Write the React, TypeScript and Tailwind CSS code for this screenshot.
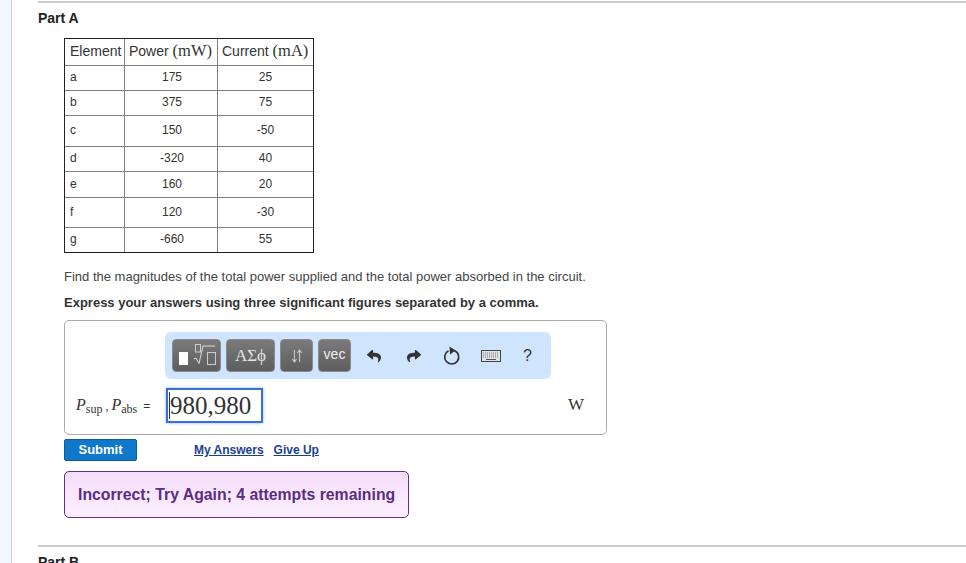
import { FaReply, FaShare } from "react-icons/fa";

const rows = [
	{ el: "a", power: "175", current: "25", h: "h-[25px]" },
	{ el: "b", power: "375", current: "75", h: "h-[25px]" },
	{ el: "c", power: "150", current: "-50", h: "h-[31px]" },
	{ el: "d", power: "-320", current: "40", h: "h-[25px]" },
	{ el: "e", power: "160", current: "20", h: "h-[26px]" },
	{ el: "f", power: "120", current: "-30", h: "h-[30px]" },
	{ el: "g", power: "-660", current: "55", h: "h-[24px]" },
];

const serif = "font-['Liberation_Serif',serif]";

function RadicalIcon() {
	return (
		<svg width="47" height="31" viewBox="1 1 47 31" fill="none">
			<rect x="7" y="13" width="9" height="13" fill="#fff" />
			<rect x="23.5" y="5.5" width="5" height="7.5" stroke="#ccc" />
			<path d="M22 20l2-1 3 5.5 4-17.5h12" stroke="#ddd" />
			<rect x="35.5" y="13.5" width="8" height="12" stroke="#ccc" />
		</svg>
	);
}

function ArrowsIcon() {
	return (
		<svg width="12" height="14" viewBox="0 0 14 16" fill="none" stroke="#ccc" strokeWidth="1.2">
			<path d="M4 1v13M1.5 11.5L4 15l2.5-3.5" />
			<path d="M10 15V2M7.5 4.5L10 1l2.5 3.5" />
		</svg>
	);
}

function ResetIcon() {
	return (
		<svg width="18" height="20" viewBox="0 0 18 20" fill="none">
			<path d="M11.5 4.6A7 7 0 1 1 5.5 4.8" stroke="#333" strokeWidth="1.7" />
			<path d="M6.5 0.5L12.5 4.5L7 8.5Z" fill="#333" />
		</svg>
	);
}

function KeyboardIcon() {
	return (
		<svg width="20" height="12" viewBox="0 0 20 12" fill="none">
			<rect x="0.5" y="0.5" width="19" height="11" fill="#dfe3e8" stroke="#444" />
			<path d="M2 3h16M2 5h16M2 7h16" stroke="#777" strokeWidth="1" strokeDasharray="1 1" />
			<path d="M5 9.5h10" stroke="#555" strokeWidth="1" />
		</svg>
	);
}

function ToolButton({ w, children }: { w: string; children: React.ReactNode }) {
	return (
		<div className={`${w} h-[33px] flex items-center justify-center rounded-[4px] border border-[#8a8a8a] bg-gradient-to-b from-[#7a7a7a] to-[#5e5e5e]`}>
			{children}
		</div>
	);
}

export default function App() {
	return (
		<div className="flex h-[563px] w-[966px] overflow-hidden bg-white font-['Liberation_Sans',sans-serif] text-[#333]">
			<div className="w-[12px] shrink-0 border-r border-[#c3d1e3] bg-[#f3f8ff]"></div>
			<div className="flex-1 pl-[26px] pt-[1px]">
				<div className="h-[2px] bg-[#ccc]"></div>
				<h2 className="mt-[8px] text-[14px] leading-[15px] font-bold text-[#222]">Part A</h2>

				<div className="ml-[26px]">
					<div className="mt-[12px] w-[250px] border border-[#222]">
						<table className="w-[248px] table-fixed border-separate border-spacing-0 text-[12px] leading-[16px] text-[#333]">
							<colgroup>
								<col className="w-[60px]" />
								<col className="w-[93px]" />
								<col className="w-[95px]" />
							</colgroup>
							<thead>
								<tr className="h-[27px] text-[14px] leading-[20px]">
									<th className="border-r border-b border-[#808080] pb-[3px] pl-[5px] text-left font-normal">Element</th>
									<th className="border-r border-b border-[#808080] pb-[3px] pl-[4px] text-left font-normal whitespace-nowrap">
										Power <span className={`${serif} text-[16.5px]`}>(mW)</span>
									</th>
									<th className="border-b border-[#808080] pb-[3px] pl-[4px] text-left font-normal whitespace-nowrap">
										Current <span className={`${serif} text-[16.5px]`}>(mA)</span>
									</th>
								</tr>
							</thead>
							<tbody>
								{rows.map((row, i) => {
									const bottom = i < rows.length - 1 ? "border-b" : "";
									return (
										<tr key={row.el} className={row.h}>
											<td className={`border-r ${bottom} border-[#808080] pb-[2px] pl-[5px]`}>{row.el}</td>
											<td className={`border-r ${bottom} border-[#808080] pb-[2px] pl-[2px] text-center`}>{row.power}</td>
											<td className={`${bottom} border-[#808080] pb-[2px] text-center`}>{row.current}</td>
										</tr>
									);
								})}
							</tbody>
						</table>
					</div>

					<p className="mt-[16px] text-[13px] leading-[16px] text-[#444]">
						Find the magnitudes of the total power supplied and the total power absorbed in the circuit.
					</p>
					<p className="mt-[10px] text-[13px] leading-[16px] font-bold text-[#333]">
						Express your answers using three significant figures separated by a comma.
					</p>

					<div className="mt-[9px] h-[115px] w-[543px] rounded-[5px] border border-[#aaa] pt-[11px]">
						<div className="ml-[100px] flex h-[47px] w-[386px] items-center rounded-[6px] bg-[#cfe5fe] pl-[7px]">
							<ToolButton w="w-[49px]">
								<RadicalIcon />
							</ToolButton>
							<div className="ml-[5px]">
								<ToolButton w="w-[49px]">
									<span className={`${serif} text-[17px] text-[#e4e4e4]`}>ΑΣϕ</span>
								</ToolButton>
							</div>
							<div className="ml-[5px]">
								<ToolButton w="w-[33px]">
									<ArrowsIcon />
								</ToolButton>
							</div>
							<div className="ml-[5px]">
								<ToolButton w="w-[33px]">
									<span className="mb-[2px] text-[14px] text-[#eee]">vec</span>
								</ToolButton>
							</div>
							<div className="ml-[15px] flex w-[16px] justify-center">
								<FaReply size={14} color="#333" />
							</div>
							<div className="ml-[24px] flex w-[16px] justify-center">
								<FaShare size={14} color="#333" />
							</div>
							<div className="ml-[21px] flex w-[18px] justify-center">
								<ResetIcon />
							</div>
							<div className="ml-[20px] flex w-[20px] justify-center">
								<KeyboardIcon />
							</div>
							<div className="ml-[22px] text-[16px] text-[#333]">?</div>
						</div>

						<div className="mt-[9px] flex items-center">
							<div className={`${serif} mb-[2px] ml-[11px] w-[90px] text-[16px] text-[#333] whitespace-nowrap`}>
								<i>P</i>
								<sub className="text-[12px]">sup</sub>
								<span className="mx-[3px] text-[12px]">,</span>
								<i>P</i>
								<sub className="text-[12px]">abs</sub>
								<span className="ml-[6px] font-['Liberation_Sans',sans-serif] text-[12px]">=</span>
							</div>
							<div className={`${serif} h-[35px] w-[97px] border-2 border-[#3b6fd4] pl-[1px] text-[25px] leading-[32px] text-[#333] shadow-[0_0_3px_#8fb4ee]`}>
								<span className="border-l border-[#333]">980,980</span>
							</div>
							<div className={`${serif} mb-[2px] ml-auto mr-[22px] text-[17px] text-[#333]`}>W</div>
						</div>
					</div>

					<div className="mt-[4px] flex h-[22px] items-center">
						<div className="flex h-[22px] w-[73px] items-center justify-center rounded-[2px] border border-[#0a5c9e] bg-[#0f78ca] text-[13px] font-bold text-white">
							Submit
						</div>
						<a className="ml-[57px] text-[12px] font-bold text-[#1b3f8f] underline">My Answers</a>
						<a className="ml-[10px] text-[12px] font-bold text-[#1b3f8f] underline">Give Up</a>
					</div>

					<div className="mt-[10px] flex h-[47px] w-[345px] items-center rounded-[5px] border border-[#662d8a] bg-gradient-to-b from-[#f4dffb] to-[#fdeeff] pl-[13px] text-[15.8px] font-bold text-[#5a2d82]">
						Incorrect; Try Again; 4 attempts remaining
					</div>
				</div>

				<div className="mt-[27px] h-[2px] bg-[#ccc]"></div>
				<h2 className="mt-[8px] text-[14px] leading-[15px] font-bold text-[#222]">Part B</h2>
			</div>
		</div>
	);
}
